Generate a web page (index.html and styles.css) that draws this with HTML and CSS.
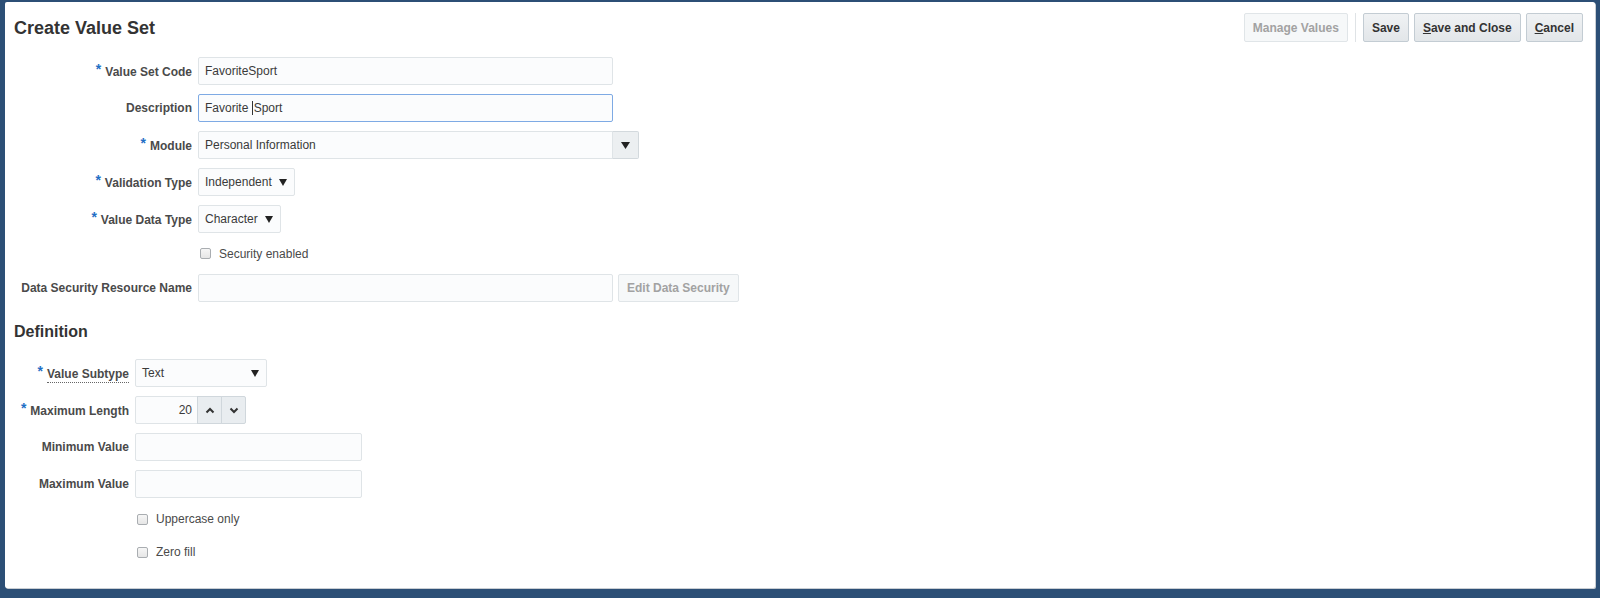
FILE: index.html
```html
<!DOCTYPE html>
<html>
<head>
<meta charset="utf-8">
<title>Create Value Set</title>
<link rel="stylesheet" href="styles.css">
</head>
<body>
<div class="panel">
  <header class="hdr">
    <h1 class="title">Create Value Set</h1>
    <div class="actions">
      <span class="btn btn-disabled">Manage Values</span>
      <span class="sep"></span>
      <span class="btn">Save</span>
      <span class="btn"><u>S</u>ave and Close</span>
      <span class="btn"><u>C</u>ancel</span>
    </div>
  </header>

  <div class="form form-main">
    <label class="lbl"><span class="req">*</span>Value Set Code</label>
    <div class="field"><div class="inp w415">FavoriteSport</div></div>

    <label class="lbl">Description</label>
    <div class="field"><div class="inp w415 focus">Favorite <span class="caret"></span>Sport</div></div>

    <label class="lbl"><span class="req">*</span>Module</label>
    <div class="field">
      <div class="inp w415 joined">Personal Information</div>
      <span class="ddbtn"><svg width="9" height="7" viewBox="0 0 9 7"><path d="M0 0H9L4.5 7Z" fill="#222"/></svg></span>
    </div>

    <label class="lbl"><span class="req">*</span>Validation Type</label>
    <div class="field"><div class="sel">Independent<svg class="tri" width="8" height="7" viewBox="0 0 8 7"><path d="M0 0H8L4 7Z" fill="#222"/></svg></div></div>

    <label class="lbl"><span class="req">*</span>Value Data Type</label>
    <div class="field"><div class="sel">Character<svg class="tri" width="8" height="7" viewBox="0 0 8 7"><path d="M0 0H8L4 7Z" fill="#222"/></svg></div></div>

    <span class="lbl"></span>
    <div class="field cbrow"><span class="cb"></span><span class="cbtext">Security enabled</span></div>

    <label class="lbl">Data Security Resource Name</label>
    <div class="field gap5">
      <div class="inp w415"></div>
      <span class="btn btn-disabled tall">Edit Data Security</span>
    </div>
  </div>

  <h2 class="sect">Definition</h2>

  <div class="form form-def">
    <label class="lbl"><span class="req">*</span><span class="dotted">Value Subtype</span></label>
    <div class="field"><div class="sel w132">Text<svg class="tri" width="8" height="7" viewBox="0 0 8 7"><path d="M0 0H8L4 7Z" fill="#222"/></svg></div></div>

    <label class="lbl"><span class="req">*</span>Maximum Length</label>
    <div class="field">
      <div class="inp w63 num joined">20</div>
      <span class="spin"><svg width="10" height="7" viewBox="0 0 10 7"><path d="M1.5 5.5L5 2L8.5 5.5" fill="none" stroke="#333" stroke-width="2"/></svg></span>
      <span class="spin"><svg width="10" height="7" viewBox="0 0 10 7"><path d="M1.5 1.5L5 5L8.5 1.5" fill="none" stroke="#333" stroke-width="2"/></svg></span>
    </div>

    <label class="lbl">Minimum Value</label>
    <div class="field"><div class="inp w227"></div></div>

    <label class="lbl">Maximum Value</label>
    <div class="field"><div class="inp w227"></div></div>

    <span class="lbl"></span>
    <div class="field cbrow cbrow-lg"><span class="cb"></span><span class="cbtext">Uppercase only</span></div>

    <span class="lbl"></span>
    <div class="field cbrow cbrow-lg"><span class="cb"></span><span class="cbtext">Zero fill</span></div>
  </div>
</div>
</body>
</html>
```

FILE: styles.css
```css
html, body {
  margin: 0;
  padding: 0;
}
body {
  background: #2c4f76;
  height: 598px;
  overflow: hidden;
  font-family: "Liberation Sans", Arial, sans-serif;
  font-size: 12px;
  color: #333;
}
.panel {
  margin: 2px 5px 0 5px;
  height: 586px;
  box-sizing: border-box;
  background: #fff;
  border-radius: 2px;
  padding: 11px 12px 0 9px;
  box-shadow: 1px 1px 0 #c9ced3;
}
.hdr {
  display: flex;
  align-items: center;
  justify-content: space-between;
  height: 29px;
}
.title {
  margin: 0;
  font-size: 18px;
  line-height: 22px;
  font-weight: bold;
  color: #333;
}
.actions {
  display: flex;
  align-items: center;
  gap: 5px;
}
.btn {
  display: inline-flex;
  align-items: center;
  justify-content: center;
  height: 29px;
  box-sizing: border-box;
  padding: 0 8px;
  border: 1px solid #c3ccd3;
  border-radius: 2px;
  background: linear-gradient(#f0f2f4, #e2e6e9);
  font-weight: bold;
  font-size: 12px;
  color: #333;
  white-space: nowrap;
}
.btn u { text-decoration: underline; }
.btn-disabled {
  background: #f6f8f9;
  border-color: #e0e5e8;
  color: #a2a2a2;
  padding: 0 8px;
}
.actions .btn-disabled { margin-right: 2px; }
.sep {
  width: 1px;
  height: 29px;
  background: #dfe3e6;
  margin-right: 2px;
}
.form {
  display: grid;
  column-gap: 6px;
  row-gap: 9px;
  align-items: center;
  justify-items: start;
}
.form-main {
  grid-template-columns: 178px auto;
  margin-top: 15px;
}
.form-def {
  grid-template-columns: 115px auto;
  row-gap: 9px;
}
.lbl {
  justify-self: end;
  font-weight: bold;
  font-size: 12px;
  color: #4a4a4a;
  white-space: nowrap;
}
.req {
  color: #1f6fc5;
  font-size: 14px;
  margin-right: 4px;
  position: relative;
  top: -2px;
}
.dotted {
  border-bottom: 1px dotted #666;
  padding-bottom: 1px;
}
.field {
  display: flex;
  align-items: center;
  min-height: 28px;
}
.gap5 { gap: 5px; }
.inp {
  height: 28px;
  box-sizing: border-box;
  border: 1px solid #dfe4e7;
  border-radius: 2px;
  background: #fbfcfd;
  padding: 0 6px;
  display: flex;
  align-items: center;
  color: #3a3a3a;
  white-space: pre;
}
.inp.focus { border-color: #7eaae4; }
.inp.joined { border-top-right-radius: 0; border-bottom-right-radius: 0; }
.caret {
  display: inline-block;
  width: 1px;
  height: 14px;
  background: #333;
  margin-right: 1px;
}
.w415 { width: 415px; }
.w227 { width: 227px; }
.w63 { width: 63px; }
.w132 { width: 132px; justify-content: space-between; }
.num { justify-content: flex-end; padding-right: 5px; }
.ddbtn {
  width: 27px;
  height: 28px;
  box-sizing: border-box;
  border: 1px solid #d3d9dd;
  border-left-color: #dfe4e7;
  border-radius: 0 2px 2px 0;
  background: #eceff1;
  display: flex;
  align-items: center;
  justify-content: center;
  margin-left: -1px;
}
.sel {
  height: 28px;
  box-sizing: border-box;
  border: 1px solid #dfe4e7;
  border-radius: 2px;
  background: #fbfcfd;
  padding: 0 7px 0 6px;
  display: flex;
  align-items: center;
  gap: 7px;
  color: #3a3a3a;
}
.tri { flex: none; }
.spin {
  width: 25px;
  height: 28px;
  box-sizing: border-box;
  border: 1px solid #d0d7dc;
  background: #e9edf0;
  display: flex;
  align-items: center;
  justify-content: center;
  margin-left: -1px;
}
.spin + .spin { border-radius: 0 2px 2px 0; }
.cbrow {
  min-height: 23px;
  height: 23px;
  padding-left: 2px;
  gap: 8px;
}
.cbrow-lg {
  min-height: 24px;
  height: 24px;
}
.cb {
  width: 11px;
  height: 11px;
  box-sizing: border-box;
  border: 1px solid #a9adb1;
  border-radius: 2px;
  background: linear-gradient(#f6f6f6, #e6e6e6);
}
.cbtext {
  color: #4a4a4a;
  font-size: 12px;
}
.tall { height: 28px; padding: 0 8px; }
.sect {
  margin: 21px 0 18px 0;
  font-size: 16px;
  line-height: 18px;
  font-weight: bold;
  color: #333;
}
```
